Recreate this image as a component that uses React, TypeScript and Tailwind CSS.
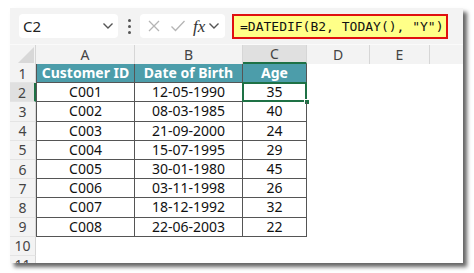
import React from "react";

const COLS = [
  { k: "A", w: 99 },
  { k: "B", w: 108 },
  { k: "C", w: 64 },
  { k: "D", w: 63 },
  { k: "E", w: 60 },
  { k: "F", w: 40 },
];

const DATA = [
  ["C001", "12-05-1990", "35"],
  ["C002", "08-03-1985", "40"],
  ["C003", "21-09-2000", "24"],
  ["C004", "15-07-1995", "29"],
  ["C005", "30-01-1980", "45"],
  ["C006", "03-11-1998", "26"],
  ["C007", "18-12-1992", "32"],
  ["C008", "22-06-2003", "22"],
];

function Chevron({ className = "" }: { className?: string }) {
  return (
    <svg width="12" height="8" viewBox="0 0 12 8" className={className}>
      <path d="M1.5 1.5 L6 6 L10.5 1.5" fill="none" stroke="#555" strokeWidth="1.4" />
    </svg>
  );
}

export default function App() {
  const font = { fontFamily: '"Noto Sans", "Open Sans", sans-serif' };
  return (
    <div className="w-[474px] h-[273px] bg-white pl-[10px] pt-[8px]" style={font}>
      <div className="w-[453px] h-[255px] bg-white overflow-hidden flex flex-col shadow-[4px_4px_4px_rgba(0,0,0,0.6)]">
        {/* toolbar */}
        <div className="h-[36px] bg-[#f3f3f3] flex items-center pl-[9px] shrink-0">
          <div className="w-[99px] h-[24px] bg-white rounded-[4px] flex items-center justify-between pl-[4px] pr-[4px]">
            <span className="text-[15px] text-[#222] leading-none">C2</span>
            <Chevron />
          </div>
          <div className="w-[22px] flex flex-col items-center gap-[3px]">
            <span className="w-[3px] h-[3px] rounded-full bg-[#555]" />
            <span className="w-[3px] h-[3px] rounded-full bg-[#555]" />
            <span className="w-[3px] h-[3px] rounded-full bg-[#555]" />
          </div>
          <div className="w-[85px] h-[24px] bg-white rounded-[4px] flex items-center pl-[7px]">
            <svg width="14" height="14" viewBox="0 0 14 14">
              <path d="M2 2 L12 12 M12 2 L2 12" stroke="#b5b5b5" strokeWidth="1.3" />
            </svg>
            <svg width="16" height="14" viewBox="0 0 16 14" className="ml-[9px]">
              <path d="M1.5 7.5 L5.5 11.5 L14.5 2" fill="none" stroke="#b5b5b5" strokeWidth="1.3" />
            </svg>
            <span
              className="ml-[7px] text-[17px] italic text-[#333] leading-none"
              style={{ fontFamily: '"Liberation Serif", serif' }}
            >
              fx
            </span>
            <Chevron className="ml-[3px]" />
          </div>
          <div className="ml-[7px] w-[216px] h-[25px] bg-[#ffff88] border-2 border-[#e01010] flex items-center pl-[6px]">
            <span
              className="text-[13px] text-[#111] leading-none whitespace-pre"
              style={{ fontFamily: '"DejaVu Sans Mono", monospace' }}
            >
              =DATEDIF(B2, TODAY(), "Y")
            </span>
          </div>
        </div>
        <div className="h-[1px] bg-[#fafafa] shrink-0" />
        {/* column header */}
        <div className="flex h-[19px] bg-[#f3f3f3] shrink-0">
          <div className="w-[26px] shrink-0 border-r border-[#d6d6d6] relative">
            <svg width="16" height="16" viewBox="0 0 16 16" className="absolute right-[1px] bottom-[1px]">
              <path d="M16 0 L16 16 L0 16 Z" fill="#d8d8d8" />
            </svg>
          </div>
          {COLS.map((c) => (
            <div
              key={c.k}
              style={{ width: c.w }}
              className={`shrink-0 flex items-center justify-center text-[14px] text-[#444] border-r border-[#d6d6d6] ${
                c.k === "C" ? "bg-[#e0e0e0] border-b-2 border-b-[#1e7145]" : ""
              }`}
            >
              {c.k === "F" ? "" : c.k}
            </div>
          ))}
        </div>
        {/* rows */}
        {Array.from({ length: 11 }).map((_, i) => {
          const r = i + 1;
          const header = r === 1;
          const dataRow = r >= 2 && r <= 9 ? DATA[r - 2] : null;
          return (
            <div key={r} className="flex h-[19.2px] shrink-0">
              <div
                className={`w-[26px] shrink-0 flex items-center justify-center text-[14px] text-[#444] border-r border-[#d6d6d6] border-b border-b-[#e4e4e4] ${
                  r === 2 ? "bg-[#e0e0e0] border-r-2 border-r-[#1e7145]" : "bg-[#f3f3f3]"
                }`}
              >
                {r}
              </div>
              {COLS.map((c, ci) => {
                const inTable = ci < 3 && r <= 9;
                if (!inTable) {
                  return <div key={c.k} style={{ width: c.w }} className="shrink-0" />;
                }
                const text = header
                  ? ["Customer ID", "Date of Birth", "Age"][ci]
                  : dataRow![ci];
                const selected = r === 2 && ci === 2;
                return (
                  <div
                    key={c.k}
                    style={{ width: c.w }}
                    className={`shrink-0 relative flex items-center justify-center border-r border-b border-[#555] leading-none ${
                      ci === 0 ? "border-l" : ""
                    } ${header ? "bg-[#4c9daa] text-white font-bold text-[14px]" : "text-[#111] text-[14px]"}`}
                  >
                    {text}
                    {selected && (
                      <>
                        <div className="absolute left-[-1px] top-[-1px] right-[-1px] bottom-[-1px] border-2 border-[#1e7145]" />
                        <div className="absolute right-[-4px] bottom-[-4px] w-[6px] h-[6px] bg-[#1e7145] border border-white" />
                      </>
                    )}
                  </div>
                );
              })}
            </div>
          );
        })}
      </div>
    </div>
  );
}
